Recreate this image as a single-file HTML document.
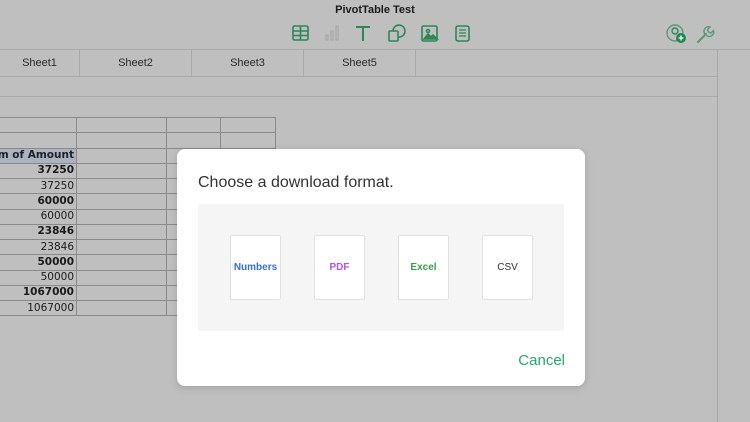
<!DOCTYPE html>
<html><head><style>
*{margin:0;padding:0;box-sizing:border-box}
body{width:750px;height:422px;background:#bfbfbf;font-family:"Liberation Sans",sans-serif;position:relative;overflow:hidden;color:#222}
.a{position:absolute}
.title{left:0;width:750px;top:4px;text-align:center;font-size:11px;font-weight:bold;color:#1a1a1a}
.tab{top:50px;height:26px;line-height:26px;font-size:11px;color:#2a2a2a;text-align:center;border-right:1px solid #a9a9a9}
.hl{background:#aaa;height:1px}
.vl{background:#a6a6a6;width:1px}
table{border-collapse:collapse;table-layout:fixed;width:276px;position:absolute;left:-1px;top:117px;font-family:"DejaVu Sans","Liberation Sans",sans-serif;font-size:10.5px}
td{border:1px solid #8a8a8a;height:15.25px;padding:0 2px;line-height:13px;overflow:hidden;white-space:nowrap}
td.n{text-align:right;color:#1a1a1a}
tr.b td.n{font-weight:bold}
.modal{left:177px;top:149px;width:408px;height:237px;background:#fff;border-radius:8px;box-shadow:0 2px 8px rgba(0,0,0,.15)}
.card{position:absolute;top:31px;width:51px;height:65px;background:#fff;border:1px solid #e2e2e2;border-radius:2px;font-size:10px;font-weight:bold;text-align:center;line-height:63px}
</style></head><body>
<div class="a title">PivotTable Test</div>
<svg class="a" style="left:285px;top:20px" width="200" height="28" fill="none" stroke="#2e8656" stroke-width="1.6">
<rect x="8" y="6" width="15" height="14" rx="1.5"/><path d="M8 11h15M8 15.5h15M15.5 6v14"/>
<g stroke="#a8a8a8" stroke-width="1.2"><rect x="41" y="15" width="2" height="5"/><rect x="46" y="11" width="2" height="9"/><rect x="51" y="6" width="2" height="14"/></g>
<path d="M71 7h14M78 7v14" stroke-width="2"/>
<rect x="104" y="11" width="9" height="10" rx="1"/><path d="M108 11a6 6 0 1 1 5 6"/>
<rect x="137" y="6" width="15" height="15" rx="1.5"/><path d="M139 19l4-5 3 3 2-2 4 4z" fill="#2e8656"/><circle cx="143" cy="11" r="1.5"/>
<rect x="171" y="6" width="13" height="15" rx="2"/><path d="M174 10h7M174 13h7M174 16h7" stroke-width="1.2"/>
</svg>
<svg class="a" style="left:665px;top:22px" width="55" height="24" fill="none" stroke="#2e8656" stroke-width="1.4">
<circle cx="10" cy="11" r="8" stroke="#5a9a75"/><circle cx="10" cy="9" r="3"/>
<circle cx="16" cy="16" r="5" fill="#1e8a4a" stroke="none"/><path d="M16 13.5v5M13.5 16h5" stroke="#fff" stroke-width="1.3"/>
<path d="M33 20l8-8" stroke="#5a9a75" stroke-width="2.2" stroke-linecap="round"/>
<path d="M40 12a4.5 4.5 0 0 1 5-7l-2.5 2.5 1 2.5 2.5 1 2.5-2.5a4.5 4.5 0 0 1-7 5" stroke="#5a9a75"/>
</svg>
<div class="a hl" style="left:0;top:49px;width:750px"></div>
<div class="a tab" style="left:0;width:80px">Sheet1</div>
<div class="a tab" style="left:80px;width:112px">Sheet2</div>
<div class="a tab" style="left:192px;width:112px">Sheet3</div>
<div class="a tab" style="left:304px;width:112px">Sheet5</div>
<div class="a hl" style="left:0;top:76px;width:718px"></div>
<div class="a hl" style="left:0;top:96px;width:718px"></div>
<div class="a vl" style="left:717px;top:50px;height:372px"></div>
<table>
<colgroup><col style="width:77px"><col style="width:90px"><col style="width:54px"><col style="width:55px"></colgroup>
<tr><td></td><td></td><td></td><td></td></tr>
<tr><td></td><td></td><td></td><td></td></tr>
<tr><td style="background:#aab3c2;font-weight:bold;text-align:right;direction:rtl">m of Amount</td><td></td><td></td><td></td></tr>
<tr class="b"><td class="n">37250</td><td></td><td></td><td></td></tr>
<tr><td class="n">37250</td><td></td><td></td><td></td></tr>
<tr class="b"><td class="n">60000</td><td></td><td></td><td></td></tr>
<tr><td class="n">60000</td><td></td><td></td><td></td></tr>
<tr class="b"><td class="n">23846</td><td></td><td></td><td></td></tr>
<tr><td class="n">23846</td><td></td><td></td><td></td></tr>
<tr class="b"><td class="n">50000</td><td></td><td></td><td></td></tr>
<tr><td class="n">50000</td><td></td><td></td><td></td></tr>
<tr class="b"><td class="n">1067000</td><td></td><td></td><td></td></tr>
<tr><td class="n">1067000</td><td></td><td></td><td></td></tr>
</table>
<div class="a modal">
<div class="a" style="left:21px;top:25px;font-size:16px;color:#333">Choose a download format.</div>
<div class="a" style="left:21px;top:55px;width:366px;height:127px;background:#f5f5f5;border-radius:2px">
<div class="card" style="left:32px;color:#3470d8">Numbers</div>
<div class="card" style="left:116px;color:#b455e0">PDF</div>
<div class="card" style="left:200px;color:#3f9a4a">Excel</div>
<div class="card" style="left:284px;color:#333;font-weight:normal">CSV</div>
</div>
<div class="a" style="right:20px;top:203px;font-size:15px;color:#22a86a">Cancel</div>
</div>
</body></html>
